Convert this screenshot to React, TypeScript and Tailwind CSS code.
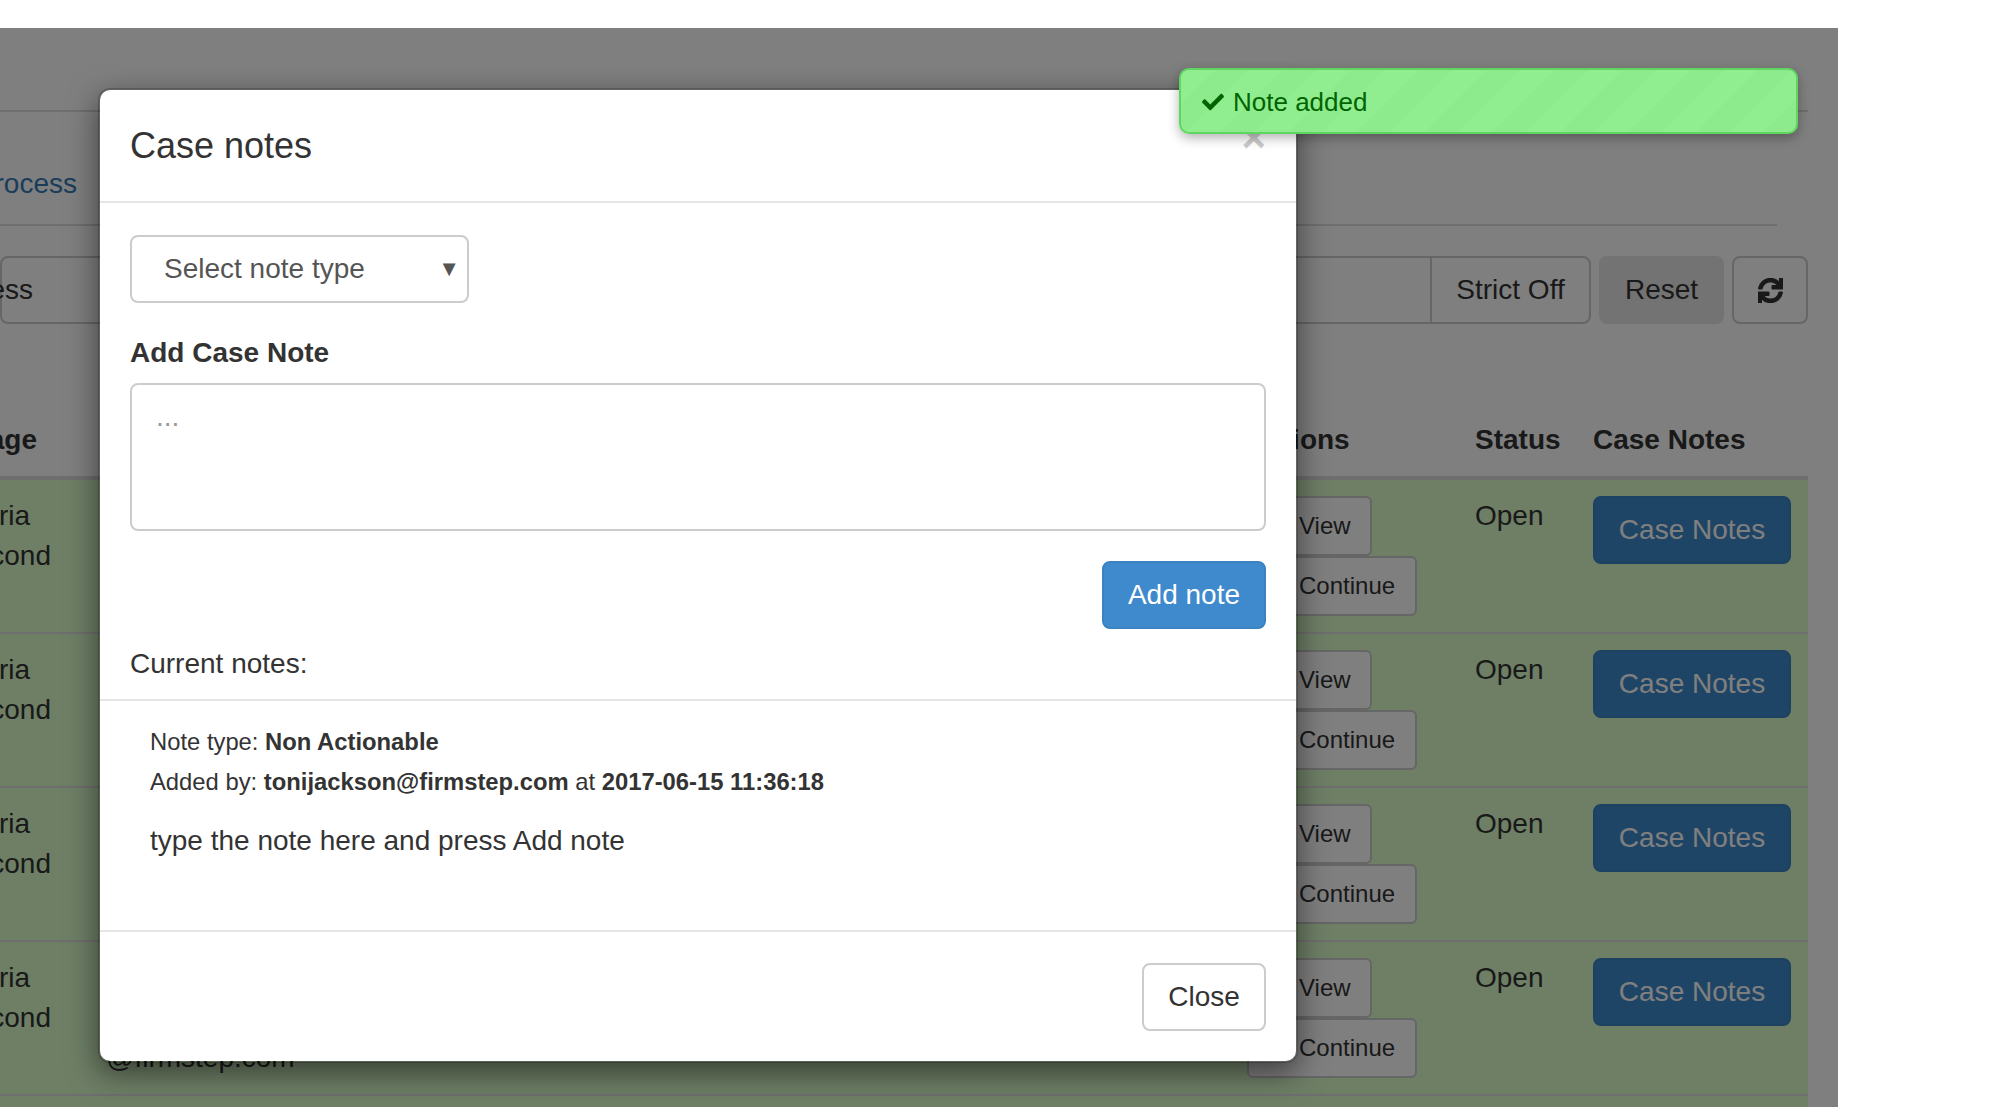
import { FaCheck, FaSync } from "react-icons/fa";

const rowGrid = "grid grid-cols-[106px_1141px_228px_118px_1fr]";

function CaseRow({ email }: { email?: boolean }) {
  return (
    <div className={`${rowGrid} h-[154px] border-b-2 border-[#ddd] bg-[#dcffcc] pt-[16px] text-[#333]`}>
      <div className="text-[28px] leading-[40px]">
        <div className="flex w-[30px] justify-end whitespace-nowrap">ria</div>
        <div className="flex w-[51px] justify-end whitespace-nowrap">cond</div>
      </div>
      <div className="pt-[80px] text-[28px] leading-[40px]">{email && "@firmstep.com"}</div>
      <div className="flex flex-col items-start">
        <button className="h-[60px] w-[125px] rounded-[6px] border-2 border-[#ccc] bg-white pl-[50px] text-left text-[24px]">View</button>
        <button className="h-[60px] w-[170px] rounded-[6px] border-2 border-[#ccc] bg-white pl-[50px] text-left text-[24px]">Continue</button>
      </div>
      <div className="text-[28px] leading-[40px]">Open</div>
      <div>
        <button className="h-[68px] w-[198px] rounded-[8px] border-2 border-[#3a82c2] bg-[#3e8acc] text-[28px] text-white">Case Notes</button>
      </div>
    </div>
  );
}

function Background() {
  return (
    <div className="text-[28px] text-[#333]">
      <div className="h-[84px] w-[1808px] border-b-2 border-[#ddd]" />
      <div className="flex h-[114px] w-[1777px] items-center border-b-2 border-[#ddd] pt-[32px]">
        <div className="flex w-[77px] justify-end whitespace-nowrap text-[#337ab7]">rocess</div>
      </div>
      <div className="mt-[30px] flex h-[68px] w-[1808px] items-stretch">
        <div className="flex flex-1 items-center rounded-l-[8px] border-2 border-[#ccc]">
          <div className="flex w-[31px] justify-end whitespace-nowrap">ess</div>
        </div>
        <div className="ml-[-2px] flex w-[161px] items-center justify-center rounded-r-[8px] border-2 border-[#ccc]">Strict Off</div>
        <div className="ml-[8px] flex w-[125px] items-center justify-center rounded-[8px] bg-[#e6e6e6]">Reset</div>
        <div className="ml-[8px] flex w-[76px] items-center justify-center rounded-[8px] border-2 border-[#ccc]">
          <FaSync className="h-[25px] w-[25px] text-[#333]" stroke="currentColor" strokeWidth={24} />
        </div>
      </div>
      <div className="w-[1808px]">
        <div className={`${rowGrid} h-[156px] items-end border-b-4 border-[#ddd] pb-[16px] font-bold leading-[40px]`}>
          <div className="flex w-[37px] justify-end whitespace-nowrap">age</div>
          <div />
          <div>Actions</div>
          <div>Status</div>
          <div>Case Notes</div>
        </div>
        <CaseRow />
        <CaseRow />
        <CaseRow />
        <CaseRow email />
        <div className="h-[154px] bg-[#dcffcc]" />
      </div>
    </div>
  );
}

function CaseNotesModal() {
  return (
    <div className="absolute left-[98px] top-[60px] w-[1200px] rounded-[12px] border-2 border-black/20 bg-white bg-clip-padding text-[28px] leading-[40px] text-[#333] shadow-[0_10px_30px_rgba(0,0,0,0.5)]">
      <div className="flex h-[113px] items-start justify-between border-b-2 border-[#e5e5e5] px-[30px] pt-[31px]">
        <h4 className="text-[36px] leading-[50px]">Case notes</h4>
        <span className="mt-[-4px] text-[42px] font-bold leading-[42px] text-black opacity-20">×</span>
      </div>
      <div className="px-[30px] pt-[32px]">
        <div className="flex h-[68px] w-[339px] items-center justify-between rounded-[8px] border-2 border-[#ccc] pl-[32px] pr-[7px] text-[#555]">
          <span>Select note type</span>
          <span className="text-[22px]">▼</span>
        </div>
        <div className="mt-[30px] font-bold">Add Case Note</div>
        <textarea
          readOnly
          placeholder="..."
          className="mt-[10px] block h-[148px] w-full resize-none rounded-[8px] border-2 border-[#ccc] px-[24px] py-[12px] placeholder:text-[#999]"
        />
        <div className="mt-[30px] flex justify-end">
          <button className="h-[68px] w-[164px] rounded-[8px] border-2 border-[#3a82c2] bg-[#3e8acc] text-white">Add note</button>
        </div>
        <div className="mt-[15px]">Current notes:</div>
      </div>
      <div className="mt-[15px] h-[233px] border-y-2 border-[#e5e5e5] px-[50px] pt-[21px]">
        <div className="text-[23.8px]">Note type: <b>Non Actionable</b></div>
        <div className="text-[23.8px]">Added by: <b>tonijackson@firmstep.com</b> at <b>2017-06-15 11:36:18</b></div>
        <div className="mt-[19px]">type the note here and press Add note</div>
      </div>
      <div className="flex justify-end px-[30px] pb-[30px] pt-[31px]">
        <button className="h-[68px] w-[124px] rounded-[8px] border-2 border-[#ccc] bg-white">Close</button>
      </div>
    </div>
  );
}

function Toast() {
  return (
    <div className="absolute left-[1179px] top-[40px] flex h-[66px] w-[619px] items-center gap-[8px] rounded-[10px] border-2 border-[#5fd65f] bg-[repeating-linear-gradient(135deg,#90ee90_0px,#90ee90_24px,#8deb8d_24px,#8deb8d_48px)] pl-[20px] pt-[2px] text-[26px] text-[#006400] shadow-[0_4px_12px_rgba(0,0,0,0.3)]">
      <FaCheck className="h-[22px] w-[24px]" />
      <span>Note added</span>
    </div>
  );
}

export default function App() {
  return (
    <div className="h-[1107px] w-full overflow-hidden bg-white pt-[28px] font-['Liberation_Sans',Arial,sans-serif]">
      <div className="relative h-[1079px] w-[1838px] overflow-hidden bg-white">
        <Background />
        <div className="absolute inset-0 bg-black/50" />
        <CaseNotesModal />
        <Toast />
      </div>
    </div>
  );
}
